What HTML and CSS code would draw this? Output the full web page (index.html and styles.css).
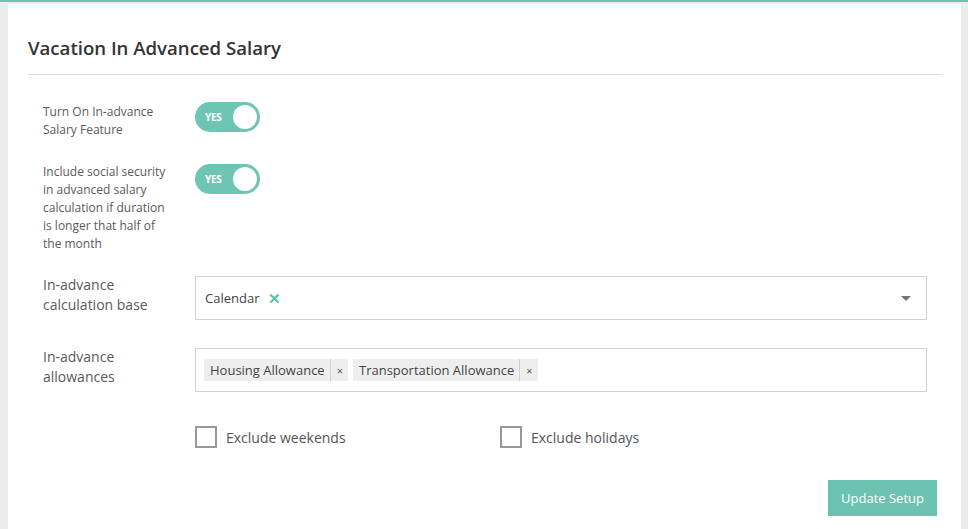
FILE: index.html
```html
<!DOCTYPE html>
<html lang="en">
<head>
<meta charset="utf-8">
<title>Vacation In Advanced Salary</title>
<link rel="stylesheet" href="styles.css">
</head>
<body>
<div class="topbar"></div>
<div class="page">
  <div class="card">
    <h2 class="title">Vacation In Advanced Salary</h2>
    <div class="form">
      <div class="row row-1">
        <div class="label small">Turn On In-advance Salary Feature</div>
        <div class="control">
          <div class="toggle"><span class="toggle-text">YES</span><span class="knob"></span></div>
        </div>
      </div>
      <div class="row row-2">
        <div class="label small">Include social security in advanced salary calculation if duration is longer that half of the month</div>
        <div class="control">
          <div class="toggle"><span class="toggle-text">YES</span><span class="knob"></span></div>
        </div>
      </div>
      <div class="row row-3">
        <div class="label big">In-advance calculation base</div>
        <div class="control">
          <div class="select">
            <span class="sel-value">Calendar</span>
            <span class="sel-clear">&#x2715;</span>
            <span class="sel-arrow"></span>
          </div>
        </div>
      </div>
      <div class="row row-4">
        <div class="label big">In-advance allowances</div>
        <div class="control">
          <div class="select multi">
            <span class="tag"><span class="tag-text">Housing Allowance</span><span class="tag-x">&#xd7;</span></span>
            <span class="tag"><span class="tag-text">Transportation Allowance</span><span class="tag-x">&#xd7;</span></span>
          </div>
        </div>
      </div>
      <div class="row row-5">
        <div class="label"></div>
        <div class="control checks">
          <label class="check"><span class="box"></span><span>Exclude weekends</span></label>
          <label class="check"><span class="box"></span><span>Exclude holidays</span></label>
        </div>
      </div>
      <div class="actions">
        <button class="btn">Update Setup</button>
      </div>
    </div>
  </div>
</div>
</body>
</html>
```
FILE: styles.css
```css
html, body {
  margin: 0;
  padding: 0;
}
body {
  background: #ececec;
  font-family: "Open Sans", "Noto Sans", sans-serif;
  color: #555;
  width: 968px;
  height: 529px;
  overflow: hidden;
}
.topbar {
  height: 2px;
  background: #6cc3b1;
}
.page {
  padding: 2px 7px 0 8px;
  background: #ececec;
  height: 525px;
}
.card {
  background: #fff;
  height: 100%;
  padding: 0 19px 0 20px;
  box-sizing: border-box;
}
.title {
  margin: 0;
  padding: 32px 0 15px;
  font-size: 18.6px;
  line-height: 23px;
  font-weight: 600;
  color: #333;
  border-bottom: 1px solid #dedede;
}
.form {
  padding: 27px 15px 0 15px;
}
.row {
  display: flex;
  align-items: flex-start;
}
.label {
  width: 152px;
  flex: none;
  box-sizing: border-box;
  padding-right: 24px;
}
.label.small {
  font-size: 12px;
  line-height: 18px;
  color: #5a5a5a;
}
.label.big {
  font-size: 14px;
  line-height: 20px;
  color: #5a5a5a;
  padding-right: 20px;
}
.control {
  flex: 1;
}
.row-1 { margin-bottom: 25px; }
.row-1 .label { padding-top: 1px; }
.row-2 .label { margin-top: -1px; }
.row-2 { margin-bottom: 23px; }
.row-3 { margin-bottom: 28px; }
.row-3 .label, .row-4 .label { margin-top: -1px; }
.row-4 { margin-bottom: 34px; }
.row-5 { margin-bottom: 32px; }

.toggle {
  width: 65px;
  height: 30px;
  border-radius: 15px;
  background: #6fc5b3;
  display: flex;
  align-items: center;
  justify-content: space-between;
  padding: 0 3px 0 10px;
  box-sizing: border-box;
}
.toggle-text {
  color: #fff;
  font-size: 10px;
  font-weight: 700;
  letter-spacing: -0.3px;
}
.knob {
  width: 24px;
  height: 24px;
  border-radius: 50%;
  background: #fff;
}

.select {
  height: 44px;
  border: 1px solid #d2d2d2;
  box-sizing: border-box;
  display: flex;
  align-items: center;
  padding: 0 15px 0 9px;
  font-size: 13px;
  color: #444;
}
.sel-value {
  color: #444;
}
.sel-clear {
  color: #5cbfa9;
  font-size: 15px;
  margin-left: 9px;
  font-weight: 600;
}
.sel-arrow {
  margin-left: auto;
  width: 0;
  height: 0;
  border-left: 5px solid transparent;
  border-right: 5px solid transparent;
  border-top: 5px solid #777;
}
.multi {
  gap: 5px;
  padding-left: 8px;
}
.tag {
  display: flex;
  align-items: center;
  height: 22px;
  background: #eeeeee;
  color: #444;
  font-size: 13px;
}
.tag-text {
  padding: 0 5px 0 6px;
  border-right: 1px solid #cfcfcf;
  line-height: 22px;
}
.tag-x {
  padding: 0 5px 0 6px;
  font-size: 11px;
  color: #555;
}

.checks {
  display: flex;
}
.check {
  display: flex;
  align-items: center;
  width: 305px;
  font-size: 14px;
  color: #555;
}
.box {
  width: 22px;
  height: 22px;
  border: 2px solid #999;
  box-sizing: border-box;
  margin-right: 9px;
  flex: none;
}

.actions {
  display: flex;
  justify-content: flex-end;
  margin-right: -10px;
}
.btn {
  font-family: "Open Sans", "Noto Sans", sans-serif;
  background: #6cc3b1;
  color: #fff;
  font-size: 13px;
  border: 0;
  width: 109px;
  height: 36px;
  padding: 0;
}
```
